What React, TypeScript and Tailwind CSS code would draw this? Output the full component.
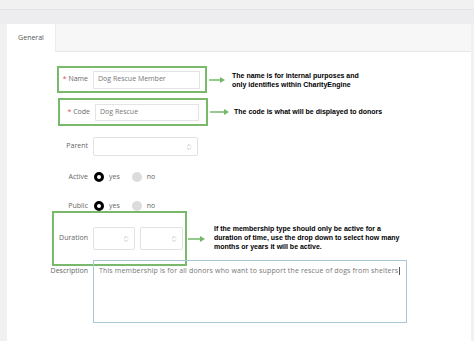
import { ChevronsUpDown } from 'lucide-react';

function Arrow({ width }: { width: number }) {
  return (
    <svg width={width} height="6" viewBox={`0 0 ${width} 6`} className="shrink-0">
      <line x1="0" y1="3" x2={width - 4} y2="3" stroke="#72b867" strokeWidth="1.5" />
      <polygon points={`${width - 5},0 ${width},3 ${width - 5},6`} fill="#72b867" />
    </svg>
  );
}

function Select({ w, h }: { w: string; h: string }) {
  return (
    <div className={`${w} ${h} flex items-center justify-end pr-[4px] bg-white border border-[#e2e2e2] rounded-[2px]`}>
      <ChevronsUpDown size={8} className="text-[#999]" strokeWidth={1.5} />
    </div>
  );
}

function Radios() {
  return (
    <div className="flex items-center">
      <span className="w-[10px] h-[10px] rounded-full border-[3px] border-black bg-white" />
      <span className="ml-[5px] text-[7px] text-[#666]">yes</span>
      <span className="ml-[12px] w-[10px] h-[10px] rounded-full bg-[#dcdcdc]" />
      <span className="ml-[5px] text-[7px] text-[#666]">no</span>
    </div>
  );
}

export default function App() {
  return (
    <div className="w-[474px] h-[341px] overflow-hidden bg-[#f1f1f2] font-['Open_Sans',sans-serif]">
      {/* top bars */}
      <div className="h-[10px] border-b border-[#e2e2e3]" />
      <div className="h-[14px] bg-[#ededef]" />

      <div className="ml-[7px] mr-[3px] h-[320px] bg-white">
        {/* tab strip */}
        <div className="h-[28px] flex bg-[#f7f7f8] border-b border-[#e6e6e6]">
          <div className="w-[49px] h-[28px] bg-white flex items-center justify-center text-[7px] text-[#555] border-r border-[#ececec]">
            General
          </div>
        </div>

        <div className="-ml-[7px] pt-[14px] text-[7px] text-[#666]">
          {/* Name */}
          <div className="flex items-center h-[27px]">
            <div className="ml-[57px] w-[150px] h-[27px] border-2 border-[#78b96c] flex items-center">
              <div className="w-[29px] text-right whitespace-nowrap">
                <span className="text-[#d9534f]">*</span> Name
              </div>
              <div className="ml-[5px] w-[107px] h-[18px] border border-[#e4e4e4] flex items-center px-[4px] text-[#777]">
                Dog Rescue Member
              </div>
            </div>
            <div className="ml-[2px]"><Arrow width={16} /></div>
            <div className="ml-[7px] font-['Liberation_Sans',sans-serif] font-bold text-[7px] leading-[9px] text-black">
              The name is for internal purposes and
              <br />
              only identifies within CharityEngine
            </div>
          </div>

          {/* Code */}
          <div className="flex items-center h-[28px] mt-[5px]">
            <div className="ml-[58px] w-[150px] h-[28px] border-2 border-[#78b96c] flex items-center">
              <div className="w-[30px] text-right whitespace-nowrap">
                <span className="text-[#d9534f]">*</span> Code
              </div>
              <div className="ml-[5px] w-[104px] h-[17px] border border-[#e4e4e4] flex items-center px-[4px] text-[#777]">
                Dog Rescue
              </div>
            </div>
            <div className="ml-[2px]"><Arrow width={19} /></div>
            <div className="ml-[5px] font-['Liberation_Sans',sans-serif] font-bold text-[7px] text-black">
              The code is what will be displayed to donors
            </div>
          </div>

          {/* Parent */}
          <div className="flex items-center mt-[11px] h-[19px]">
            <div className="w-[88px] text-right">Parent</div>
            <div className="ml-[5px]"><Select w="w-[105px]" h="h-[19px]" /></div>
          </div>

          {/* Active */}
          <div className="flex items-center mt-[16px] h-[10px]">
            <div className="w-[88px] text-right">Active</div>
            <div className="ml-[6px]"><Radios /></div>
          </div>

          {/* Public */}
          <div className="flex items-center mt-[19px] h-[10px]">
            <div className="w-[88px] text-right">Public</div>
            <div className="ml-[6px]"><Radios /></div>
          </div>

          {/* Duration */}
          <div className="flex items-center mt-0 h-[55px]">
            <div className="ml-[52px] w-[135px] h-[55px] border-2 border-[#78b96c] flex items-center">
              <div className="w-[34px] text-right">Duration</div>
              <div className="ml-[5px]"><Select w="w-[42px]" h="h-[23px]" /></div>
              <div className="ml-[5px]"><Select w="w-[43px]" h="h-[23px]" /></div>
            </div>
            <div className="ml-[1px]"><Arrow width={17} /></div>
            <div className="ml-[9px] -mt-[2px] font-['Liberation_Sans',sans-serif] font-bold text-[7px] leading-[9px] text-black">
              If the membership type should only be active for a
              <br />
              duration of time, use the drop down to select how many
              <br />
              months or years it will be active.
            </div>
          </div>

          {/* Description */}
          <div className="flex items-start -mt-[6px]">
            <div className="w-[88px] text-right pt-[6px]">Description</div>
            <div className="ml-[5px] w-[314px] h-[63px] border border-[#a9c8d8] px-[5px] pt-[4px] text-[7px] tracking-[0.15px] whitespace-nowrap text-[#777] leading-[12px]">
              This membership is for all donors who want to support the rescue of dogs from shelters
              <span className="inline-block w-px h-[8px] bg-[#555] align-middle ml-px" />
            </div>
          </div>
        </div>
      </div>
    </div>
  );
}
